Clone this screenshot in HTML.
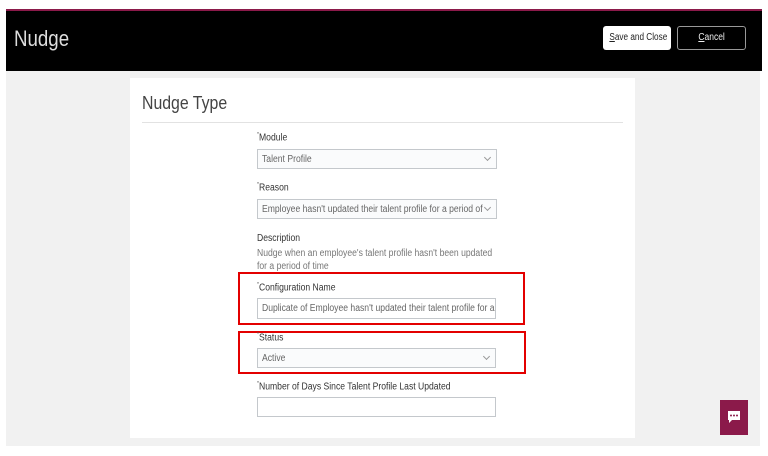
<!DOCTYPE html>
<html><head><style>
*{margin:0;padding:0;box-sizing:border-box}
body{width:768px;height:456px;background:#fff;position:relative;overflow:hidden;font-family:"Liberation Sans",sans-serif;}
.a{position:absolute}
.lbl{position:absolute;left:257px;font-size:10px;color:#333;transform:scaleX(.86);transform-origin:left;white-space:nowrap}
.lbl sup{font-size:6px;color:#555}
.inp{position:absolute;left:257px;width:240px;height:20px;border:1px solid #c4c8cc;background:#fafbfc;font-size:10px;color:#666;padding:4px 4px;white-space:nowrap;overflow:hidden}
.inp span{display:inline-block;transform:scaleX(.86);transform-origin:left}
.chev{position:absolute;right:6px;top:5px;width:5px;height:5px;border-right:1px solid #999;border-bottom:1px solid #999;transform:rotate(45deg);background:inherit}
.red{position:absolute;border:2px solid #e30000}
</style></head><body>
<div class="a" style="left:6px;top:9px;width:756px;height:2px;background:#8b1a4a"></div>
<div class="a" style="left:6px;top:11px;width:756px;height:60px;background:#000"></div>
<div class="a" style="left:14px;top:26px;font-size:22px;color:#ddd;transform:scaleX(.85);transform-origin:left">Nudge</div>
<div class="a" style="left:603px;top:26px;width:68px;height:24px;background:#fff;border-radius:3px;font-size:10px;color:#222;text-align:center;line-height:24px;white-space:nowrap"><span style="display:inline-block;transform:scaleX(.82)"><u>S</u>ave and Close</span></div>
<div class="a" style="left:677px;top:26px;width:69px;height:24px;border:1px solid #999;border-radius:3px;font-size:10px;color:#eee;text-align:center;line-height:22px"><span style="display:inline-block;transform:scaleX(.85)"><u>C</u>ancel</span></div>
<div class="a" style="left:6px;top:71px;width:754px;height:375px;background:#f1f1f1"></div>
<div class="a" style="left:130px;top:78px;width:505px;height:360px;background:#fff"></div>
<div class="a" style="left:142px;top:93px;font-size:18px;color:#444;transform:scaleX(.88);transform-origin:left">Nudge Type</div>
<div class="a" style="left:142px;top:122px;width:481px;height:1px;background:#e2e2e2"></div>
<div class="lbl" style="top:132px"><sup>*</sup>Module</div>
<div class="inp" style="top:149px"><span>Talent Profile</span><div class="chev"></div></div>
<div class="lbl" style="top:182px"><sup>*</sup>Reason</div>
<div class="inp" style="top:199px"><span>Employee hasn't updated their talent profile for a period of</span><div class="chev" style="background:#fafbfc"></div></div>
<div class="lbl" style="top:233px">Description</div>
<div class="a" style="left:257px;top:247px;font-size:10px;color:#777;line-height:13px;width:290px;transform:scaleX(.86);transform-origin:left">Nudge when an employee's talent profile hasn't been updated<br>for a period of time</div>
<div class="red" style="left:238px;top:272px;width:287px;height:53px"></div>
<div class="lbl" style="top:282px"><sup>*</sup>Configuration Name</div>
<div class="inp" style="top:298px;width:239px;height:21px;background:#fff"><span>Duplicate of Employee hasn't updated their talent profile for a period</span></div>
<div class="red" style="left:238px;top:331px;width:288px;height:43px"></div>
<div class="lbl" style="top:332px"><sup>*</sup>Status</div>
<div class="inp" style="top:348px;width:239px"><span>Active</span><div class="chev"></div></div>
<div class="lbl" style="top:381px"><sup>*</sup>Number of Days Since Talent Profile Last Updated</div>
<div class="inp" style="top:397px;width:239px;background:#fff"></div>
<div class="a" style="left:720px;top:400px;width:28px;height:35px;background:#8b1a4a">
<svg width="28" height="35" viewBox="0 0 28 35"><path d="M8 11h12v9h-8l-3 3v-3h-1z" fill="#fff"/><circle cx="11" cy="15.5" r="1" fill="#8b1a4a"/><circle cx="14" cy="15.5" r="1" fill="#8b1a4a"/><circle cx="17" cy="15.5" r="1" fill="#8b1a4a"/></svg></div>
</body></html>
